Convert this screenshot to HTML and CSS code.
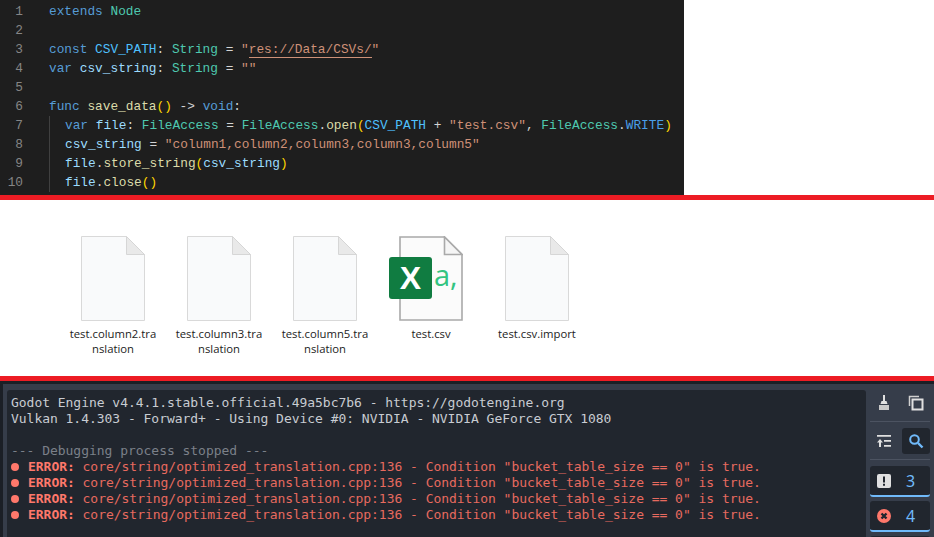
FILE: index.html
```html
<!DOCTYPE html>
<html lang="en">
<head>
<meta charset="utf-8">
<title>Godot CSV translation</title>
<link rel="stylesheet" href="styles.css">
</head>
<body>
<section class="code-wrap">
  <div class="code">
    <div class="line"><span class="ln">1</span><span class="src"><span class="kw">extends</span> <span class="ty">Node</span></span></div>
    <div class="line"><span class="ln">2</span><span class="src"></span></div>
    <div class="line"><span class="ln">3</span><span class="src"><span class="kw">const</span> <span class="co">CSV_PATH</span><span class="tx">:</span> <span class="ty">String</span> <span class="tx">=</span> <span class="st">"<span class="link">res://Data/CSVs/</span>"</span></span></div>
    <div class="line"><span class="ln">4</span><span class="src"><span class="kw">var</span> <span class="va">csv_string</span><span class="tx">:</span> <span class="ty">String</span> <span class="tx">=</span> <span class="st">""</span></span></div>
    <div class="line"><span class="ln">5</span><span class="src"></span></div>
    <div class="line"><span class="ln">6</span><span class="src"><span class="kw">func</span> <span class="fn">save_data</span><span class="br">()</span> <span class="tx">-&gt;</span> <span class="kw">void</span><span class="tx">:</span></span></div>
    <div class="line"><span class="ln">7</span><span class="src in"><span class="kw">var</span> <span class="va">file</span><span class="tx">:</span> <span class="ty">FileAccess</span> <span class="tx">=</span> <span class="ty">FileAccess</span><span class="tx">.</span><span class="fn">open</span><span class="br">(</span><span class="co">CSV_PATH</span> <span class="tx">+</span> <span class="st">"test.csv"</span><span class="tx">,</span> <span class="ty">FileAccess</span><span class="tx">.</span><span class="en">WRITE</span><span class="br">)</span></span></div>
    <div class="line"><span class="ln">8</span><span class="src in"><span class="va">csv_string</span> <span class="tx">=</span> <span class="st">"column1,column2,column3,column3,column5"</span></span></div>
    <div class="line"><span class="ln">9</span><span class="src in"><span class="va">file</span><span class="tx">.</span><span class="fn">store_string</span><span class="br">(</span><span class="va">csv_string</span><span class="br">)</span></span></div>
    <div class="line"><span class="ln">10</span><span class="src in"><span class="va">file</span><span class="tx">.</span><span class="fn">close</span><span class="br">()</span></span></div>
  </div>
</section>
<div class="rule"></div>
<section class="files">
  <figure class="tile">
    <svg class="doc" viewBox="0 0 64 85"><path d="M.5.5H45.500L63.500 18.500V84.500H.5Z" fill="#f9fafb" stroke="#d9d9d9"/><path d="M45.500.5V18.500H63.500Z" fill="#e9e9e9" stroke="#d6d6d6"/></svg>
    <figcaption>test.column2.translation</figcaption>
  </figure>
  <figure class="tile">
    <svg class="doc" viewBox="0 0 64 85"><path d="M.5.5H45.500L63.500 18.500V84.500H.5Z" fill="#f9fafb" stroke="#d9d9d9"/><path d="M45.500.5V18.500H63.500Z" fill="#e9e9e9" stroke="#d6d6d6"/></svg>
    <figcaption>test.column3.translation</figcaption>
  </figure>
  <figure class="tile">
    <svg class="doc" viewBox="0 0 64 85"><path d="M.5.5H45.500L63.500 18.500V84.500H.5Z" fill="#f9fafb" stroke="#d9d9d9"/><path d="M45.500.5V18.500H63.500Z" fill="#e9e9e9" stroke="#d6d6d6"/></svg>
    <figcaption>test.column5.translation</figcaption>
  </figure>
  <figure class="tile">
    <div class="csv">
      <svg class="doc" viewBox="0 0 64 85"><path d="M1 1H45.500L63 18.500V84H1Z" fill="#fbfbfb" stroke="#a9a9a9" stroke-width="1.600"/><path d="M45.500 1V18.500H63Z" fill="#f5f5f5" stroke="#a9a9a9" stroke-width="1.600"/></svg>
      <span class="xl"><span class="x">X</span></span>
      <span class="acomma">a,</span>
    </div>
    <figcaption>test.csv</figcaption>
  </figure>
  <figure class="tile">
    <svg class="doc" viewBox="0 0 64 85"><path d="M.5.5H45.500L63.500 18.500V84.500H.5Z" fill="#f9fafb" stroke="#d9d9d9"/><path d="M45.500.5V18.500H63.500Z" fill="#e9e9e9" stroke="#d6d6d6"/></svg>
    <figcaption>test.csv.import</figcaption>
  </figure>
</section>
<div class="rule"></div>
<section class="godot">
  <div class="panel">
    <div class="out">Godot Engine v4.4.1.stable.official.49a5bc7b6 - https://godotengine.org</div>
    <div class="out">Vulkan 1.4.303 - Forward+ - Using Device #0: NVIDIA - NVIDIA GeForce GTX 1080</div>
    <div class="out">&nbsp;</div>
    <div class="out dim">--- Debugging process stopped ---</div>
    <div class="out err"><span class="dot"></span><b>ERROR:</b> core/string/optimized_translation.cpp:136 - Condition "bucket_table_size == 0" is true.</div>
    <div class="out err"><span class="dot"></span><b>ERROR:</b> core/string/optimized_translation.cpp:136 - Condition "bucket_table_size == 0" is true.</div>
    <div class="out err"><span class="dot"></span><b>ERROR:</b> core/string/optimized_translation.cpp:136 - Condition "bucket_table_size == 0" is true.</div>
    <div class="out err"><span class="dot"></span><b>ERROR:</b> core/string/optimized_translation.cpp:136 - Condition "bucket_table_size == 0" is true.</div>
  </div>
  <aside class="side">
    <div class="tools">
      <span class="tool"><svg viewBox="0 0 16 16" width="16" height="16"><path d="M7 0h2v6H7z" fill="#e0e0e0"/><path d="M5.500 6h5l1 3h-7z" fill="#e0e0e0"/><path d="M3 10h10v5H3z" fill="#c9c9c9"/></svg></span>
      <span class="tool"><svg viewBox="0 0 16 16" width="16" height="16"><path d="M1.500 11V1.500H11" fill="none" stroke="#d0d0d0" stroke-width="1.500"/><rect x="4.500" y="4.500" width="10" height="10" fill="none" stroke="#e0e0e0" stroke-width="2"/></svg></span>
    </div>
    <div class="sep"></div>
    <div class="tools">
      <span class="tool"><svg viewBox="0 0 16 16" width="16" height="16"><path d="M1 2h14v1.800H1zM8 7h7v1.800H8zM8 12h7v1.800H8z" fill="#e0e0e0"/><path d="M4 6l3 3.500H5V14H3V9.500H1z" fill="#e0e0e0"/></svg></span>
      <span class="tool on"><svg viewBox="0 0 16 16" width="16" height="16"><circle cx="6.500" cy="6.500" r="4.300" fill="none" stroke="#70bafa" stroke-width="2"/><path d="M10 10l4.500 4.500" stroke="#70bafa" stroke-width="2.400"/></svg></span>
    </div>
    <div class="sep"></div>
    <div class="badge"><svg viewBox="0 0 14 14" width="14" height="14"><rect width="14" height="14" rx="2" fill="#e0e0e0"/><path d="M6 2.500h2v6H6zM6 9.800h2v2H6z" fill="#21262e"/></svg><span>3</span></div>
    <div class="badge"><svg viewBox="0 0 14 14" width="14" height="14"><circle cx="7" cy="7" r="7" fill="#ff786b"/><path d="M4.500 4.500l5 5m0-5l-5 5" stroke="#21262e" stroke-width="2.400"/></svg><span>4</span></div>
    <div class="badge stub"></div>
  </aside>
</section>
</body>
</html>
```
FILE: styles.css
```css
* { box-sizing: border-box; }
html, body { margin: 0; padding: 0; }
body { width: 934px; height: 537px; overflow: hidden; background: #fff; display: flex; flex-direction: column; }

.code-wrap { height: 195px; flex: none; }
.code { width: 684px; height: 195px; padding-top: 2px; background: #1e1e1e; font: 12.8px/19px "Liberation Mono", monospace; }
.line { display: flex; height: 19px; white-space: pre; }
.ln { width: 23px; text-align: right; color: #858585; flex: none; margin-right: 26px; }
.src { display: block; }
.in { border-left: 1px solid #404040; padding-left: 15px; }
.kw { color: #569cd6; }
.ty { color: #4ec9b0; }
.st { color: #ce9178; }
.va { color: #9cdcfe; }
.co { color: #4fc1ff; }
.fn { color: #dcdcaa; }
.br { color: #ffd700; }
.tx { color: #d4d4d4; }
.en { color: #4a9ee8; }
.link { border-bottom: 1px solid #ce9178; }

.rule { height: 5px; flex: none; background: #ed1c24; }

.files { height: 176px; flex: none; display: flex; align-items: flex-start; padding: 36px 0 0 60px; font: 11.3px/15px "Open Sans", sans-serif; color: #1c1c1c; }
.tile { margin: 0; width: 106px; flex: none; display: flex; flex-direction: column; align-items: center; }
.doc { width: 64px; height: 85px; display: block; flex: none; }
figcaption { width: 90px; margin-top: 5px; text-align: center; word-break: break-all; }
.csv { position: relative; width: 64px; height: 85px; }
.xl { position: absolute; left: -10px; top: 21px; width: 43px; height: 42px; background: #107c41; border-radius: 3px; display: flex; align-items: center; justify-content: center; }
.x { font: bold 32px/1 "Liberation Sans", sans-serif; color: #fff; }
.acomma { position: absolute; left: 35px; top: 22px; font: 29px/34px "Open Sans", sans-serif; color: #33c481; }

.godot { flex: 1; min-height: 0; overflow: hidden; display: flex; background: #363d4a; border-top: 3px solid #1b1f26; border-left: 3px solid #1b1f26; padding: 6px 0 0 4px; }
.panel { width: 859px; flex: none; background: #21262e; border-radius: 3px 3px 0 0; padding: 5px 0 0 4px; font: 13px/16px "DejaVu Sans Mono", monospace; color: #c8ccd2; letter-spacing: -.03px; }
.out { height: 16px; white-space: pre; }
.dim { color: #7b8089; }
.err { color: #e76a5f; position: relative; padding-left: 17px; }
.err b { color: #ff786b; font-weight: bold; }
.dot { position: absolute; left: 0; top: 4px; width: 8px; height: 8px; border-radius: 50%; background: #ff786b; }
.side { flex: 1; padding: 0 4px; display: flex; flex-direction: column; }
.tools { display: flex; justify-content: space-between; height: 26px; flex: none; }
.sep + .tools { margin-top: 6px; }
.tool { width: 28px; height: 26px; display: flex; align-items: center; justify-content: center; border-radius: 3px; }
.on { background: #21262e; }
.sep { height: 1px; background: #4c5361; margin-top: 5px; flex: none; }
.badge { height: 31px; margin-top: 6px; flex: none; display: flex; align-items: center; gap: 15px; padding-left: 7px; background: #21262e; border-radius: 3px; border-bottom: 2px solid #70bafa; color: #70bafa; font: 16px/1 "Noto Sans", sans-serif; }
.badge + .badge { margin-top: 4px; }
.stub { border-bottom: 0; }
```
